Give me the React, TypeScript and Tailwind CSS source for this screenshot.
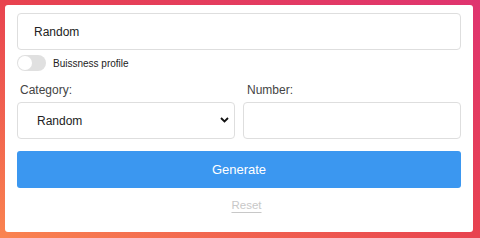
import React, { useState } from 'react';

export default function App() {
  const [name, setName] = useState('Random');
  const [business, setBusiness] = useState(false);
  const [category, setCategory] = useState('Random');
  const [num, setNum] = useState('');

  return (
    <div className="h-[238px] w-full pt-[5px] pl-[5px] pr-[7px] pb-[6px] bg-[linear-gradient(to_top_right,#fa8450,#e8434f_50%,#df3470)] font-['Liberation_Sans',Arial,sans-serif]">
      <div className="h-full bg-white rounded-[3px] px-[12px] pt-[8px] flex flex-col">
        <input
          type="text"
          value={name}
          onChange={(e) => setName(e.target.value)}
          className="h-[37px] w-full border border-[#dedede] rounded-[4px] px-[16px] text-[12px] text-[#222] outline-none"
        />

        <div className="mt-[5px] h-[16px] flex items-center">
          <button
            onClick={() => setBusiness(!business)}
            className={`relative w-[29px] h-[16px] rounded-full ${business ? 'bg-[#3b97f0]' : 'bg-[#e0e0e0]'}`}
          >
            <span
              className={`absolute top-[1px] w-[14px] h-[14px] rounded-full bg-white ${business ? 'left-[14px]' : 'left-[1px]'}`}
            />
          </button>
          <span className="ml-[7px] text-[10px] text-[#222]">Buissness profile</span>
        </div>

        <div className="mt-[11px] grid grid-cols-2 gap-x-[8px]">
          <div className="flex flex-col">
            <label className="pl-[3px] text-[12px] leading-[16px] text-[#444] mb-[4px]">Category:</label>
            <div className="relative">
              <select
                value={category}
                onChange={(e) => setCategory(e.target.value)}
                className="appearance-none h-[37px] w-full border border-[#dedede] rounded-[4px] pl-[19px] text-[12px] text-[#222] bg-white outline-none"
              >
                <option>Random</option>
                <option>Food</option>
                <option>Tech</option>
              </select>
              <svg className="absolute right-[6px] top-[15px] pointer-events-none" width="9" height="6" viewBox="0 0 9 6">
                <path d="M1 1l3.5 3.5L8 1" fill="none" stroke="#111" strokeWidth="1.8" />
              </svg>
            </div>
          </div>
          <div className="flex flex-col">
            <label className="pl-[4px] text-[12px] leading-[16px] text-[#444] mb-[4px]">Number:</label>
            <input
              type="text"
              value={num}
              onChange={(e) => setNum(e.target.value)}
              className="h-[37px] w-full border border-[#dedede] rounded-[4px] px-[15px] text-[12px] text-[#222] outline-none"
            />
          </div>
        </div>

        <button className="mt-[12px] h-[37px] w-full bg-[#3b97f0] rounded-[3px] text-white text-[13px]">
          Generate
        </button>

        <div className="mt-[9px] flex justify-center pl-[15px]">
          <button className="text-[11.5px] text-[#c8c8c8] underline underline-offset-[3px]">Reset</button>
        </div>
      </div>
    </div>
  );
}
